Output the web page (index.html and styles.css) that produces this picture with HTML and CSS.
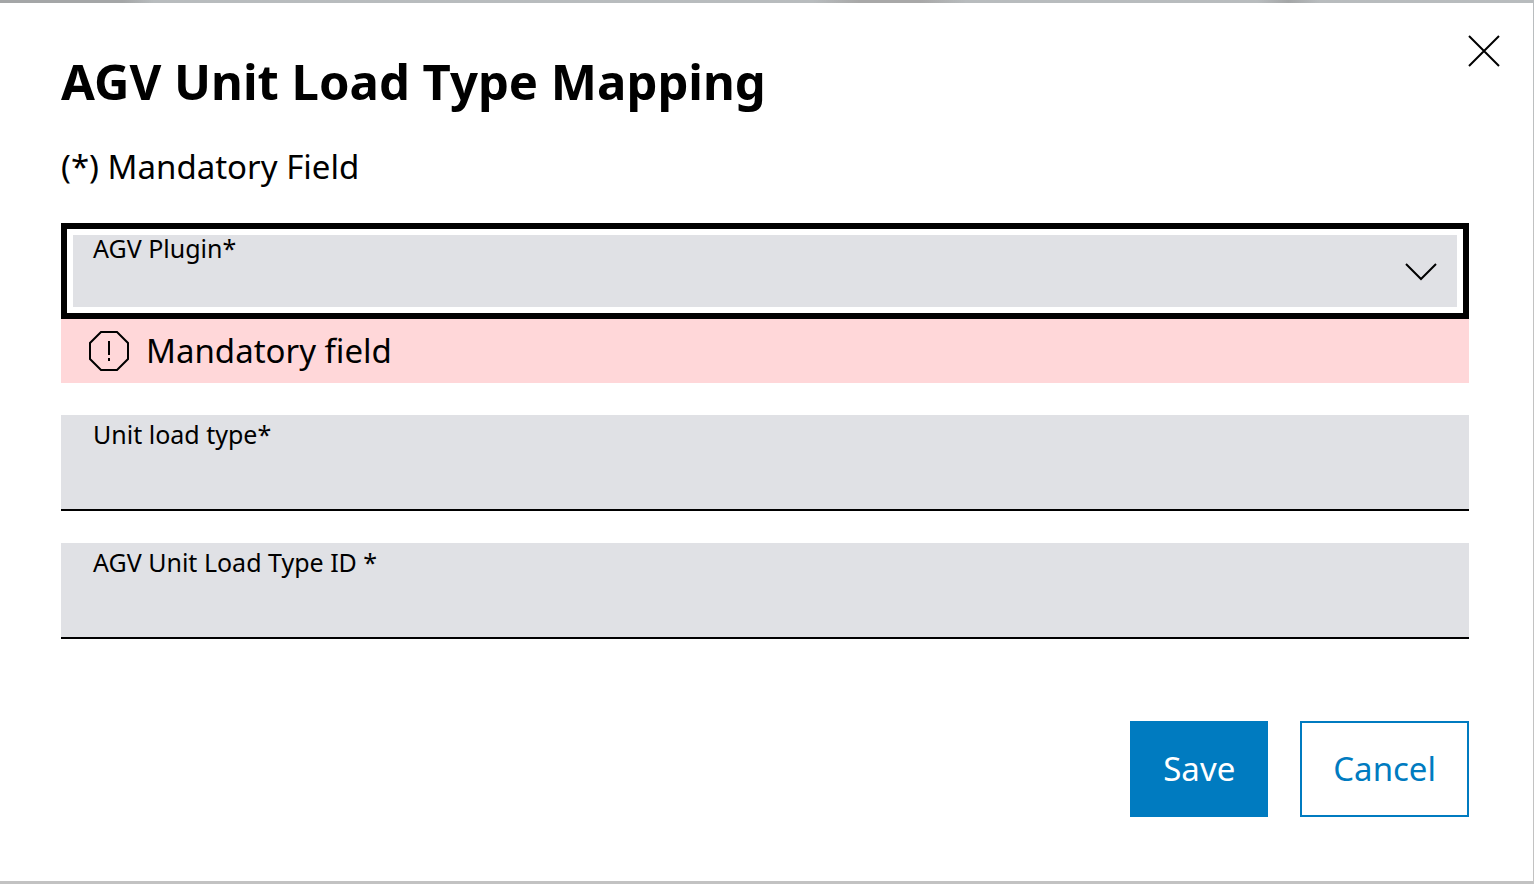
FILE: index.html
```html
<!DOCTYPE html>
<html lang="en">
<head>
  <meta charset="UTF-8">
  <meta name="viewport" content="width=device-width, initial-scale=1">
  <title>AGV Unit Load Type Mapping</title>
  <link rel="stylesheet" href="styles.css">
</head>
<body>

  <main class="dialog" role="dialog" aria-labelledby="dialogTitle">
    <button type="button" class="close-button" aria-label="Close">
      <svg width="32" height="32" viewBox="0 0 32 32">
        <path d="M1 1 L31 31 M31 1 L1 31"/>
      </svg>
    </button>

    <h1 id="dialogTitle">AGV Unit Load Type Mapping</h1>
    <p class="hint">(*) Mandatory Field</p>

    <form>
      <div class="field-group">
        <div class="field field-focused">
          <label for="agvPlugin">AGV Plugin*</label>
          <select id="agvPlugin" required>
            <option value=""></option>
          </select>
          <svg class="chevron" width="32" height="18" viewBox="0 0 32 18">
            <path d="M1 1 L16 16 L31 1"/>
          </svg>
        </div>
        <div class="error">
          <svg width="42" height="42" viewBox="0 0 42 42">
            <path d="M13 2 H29 L40 13 V29 L29 40 H13 L2 29 V13 Z"/>
            <path d="M21 11 V25 M21 28 V31"/>
          </svg>
          <span>Mandatory field</span>
        </div>
      </div>

      <div class="field">
        <label for="unitLoadType">Unit load type*</label>
        <input type="text" id="unitLoadType" required>
      </div>

      <div class="field">
        <label for="unitLoadTypeId">AGV Unit Load Type ID *</label>
        <input type="text" id="unitLoadTypeId" required>
      </div>

      <div class="actions">
        <button type="submit" class="button button-primary">Save</button>
        <button type="button" class="button button-secondary">Cancel</button>
      </div>
    </form>
  </main>

</body>
</html>
```
FILE: styles.css
```css
* {
  box-sizing: border-box;
}

body {
  display: flex;
  min-height: 100vh;
  margin: 0;
  padding: 3px 1px 3px 0;
  /* dimmed page behind the dialog */
  background:
    linear-gradient(90deg, #a4a6a7 8%, transparent 10%, transparent 53%, #a8a8a8 56%, #a8a8a8 60%, transparent 63%, transparent 82%, #a4a6a7 84%, transparent 86%) top / 100% 3px no-repeat,
    linear-gradient(#b8bcbe, #c2c2c2 30%);
  color: #000;
  font-family: "Noto Sans", "Open Sans", sans-serif;
  font-size: 33px;
  line-height: 48px;
}

.dialog {
  position: relative;
  flex: 1;
  padding: 46px 64px 64px 61px;
  background: #fff;
}

h1 {
  margin: 0 0 30px;
  font-size: 49px;
  font-weight: bold;
  line-height: 64px;
}

.hint {
  margin: 0 0 32px;
}

svg {
  display: block;
  fill: none;
  stroke: #000;
  stroke-width: 2;
}

.close-button {
  position: absolute;
  top: 24px;
  right: 25px;
  padding: 8px;
  border: none;
  background: none;
  cursor: pointer;
}

form {
  display: flex;
  flex-direction: column;
  gap: 32px;
}

.field {
  position: relative;
  display: flex;
  flex-direction: column;
  height: 96px;
  padding-top: 3px;
  border-bottom: 2px solid #000;
  background: #e0e1e5;
}

.field label {
  padding: 0 32px;
  font-size: 25px;
  line-height: 32px;
}

.field input,
.field select {
  flex: 1;
  width: 100%;
  min-height: 0;
  padding: 0 32px;
  border: none;
  outline: none;
  background: transparent;
  font: inherit;
  appearance: none;
}

/* black ring with a white gap */
.field-focused {
  padding: 3px 6px 6px;
  border: 6px solid #000;
  box-shadow: inset 0 0 0 6px #fff;
}

.field-focused label {
  padding: 0 20px;
}

.chevron {
  position: absolute;
  top: 34px;
  right: 26px;
  pointer-events: none;
}

.error {
  display: flex;
  align-items: center;
  gap: 16px;
  height: 64px;
  padding: 0 27px;
  background: #ffd7d9;
}

.actions {
  display: flex;
  justify-content: flex-end;
  gap: 32px;
  margin-top: 50px;
}

.button {
  height: 96px;
  padding: 0 31px;
  border: 2px solid #007bc0;
  font: inherit;
  cursor: pointer;
}

.button-primary {
  background: #007bc0;
  color: #fff;
}

.button-secondary {
  background: #fff;
  color: #007bc0;
}
```
